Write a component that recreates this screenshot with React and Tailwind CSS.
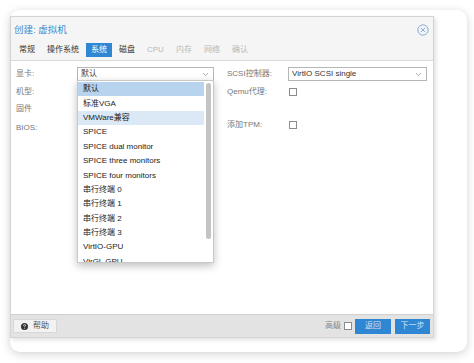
import React from 'react'

const font = { fontFamily: '"Liberation Sans", "Noto Sans CJK SC", sans-serif' }

const tabs = [
  { label: '常规', state: 'on' },
  { label: '操作系统', state: 'on' },
  { label: '系统', state: 'active' },
  { label: '磁盘', state: 'on' },
  { label: 'CPU', state: 'off' },
  { label: '内存', state: 'off' },
  { label: '网络', state: 'off' },
  { label: '确认', state: 'off' },
]

const options = [
  '默认',
  '标准VGA',
  'VMWare兼容',
  'SPICE',
  'SPICE dual monitor',
  'SPICE three monitors',
  'SPICE four monitors',
  '串行终端 0',
  '串行终端 1',
  '串行终端 2',
  '串行终端 3',
  'VirtIO-GPU',
  'VirGL GPU',
]

function Chevron() {
  return (
    <svg width="7" height="5" viewBox="0 0 7 5" className="text-gray-400">
      <path d="M1 1.2 L3.5 3.6 L6 1.2" fill="none" stroke="currentColor" strokeWidth="0.9" />
    </svg>
  )
}

function Checkbox() {
  return <div className="w-[8px] h-[8px] shrink-0 border border-[#8c8c8c] bg-white" />
}

export default function App() {
  return (
    <div className="w-[474px] h-[363px] bg-white overflow-hidden pt-[10px] pl-[10px]" style={font}>
      <div className="w-[457px] h-[342px] rounded-[10px] bg-white shadow-[0_2px_10px_rgba(0,0,0,0.18)] pt-[6px] flex">
        {/* dialog */}
        <div className="w-[424px] h-[322px] flex flex-col bg-[#f5f5f5] border border-[#d4d4d4] shadow-[2px_2px_4px_rgba(0,0,0,0.12)]">
          <div className="h-[22px] flex items-center justify-between pl-[3px] pr-[4px] pt-[4px]">
            <span className="text-[9.5px] text-[#3d8fd1]">创建: 虚拟机</span>
            <svg width="12" height="12" viewBox="0 0 12 12" className="text-[#7ba7d6]">
              <circle cx="6" cy="6" r="5.2" fill="none" stroke="currentColor" strokeWidth="0.9" />
              <path d="M3.9 3.9 L8.1 8.1 M8.1 3.9 L3.9 8.1" stroke="currentColor" strokeWidth="0.9" />
            </svg>
          </div>
          <div className="h-[21px] flex items-center pl-[3px] gap-[2px]">
            {tabs.map((t) => (
              <div
                key={t.label}
                className={
                  t.state === 'active'
                    ? 'h-[14px] px-[5px] flex items-center bg-[#2f86d2] text-white text-[8px]'
                    : t.state === 'on'
                    ? 'h-[14px] px-[5px] flex items-center text-[#333] text-[8px]'
                    : 'h-[14px] px-[5px] flex items-center text-[#b8b8b8] text-[8px]'
                }
              >
                {t.label}
              </div>
            ))}
          </div>
          {/* body */}
          <div className="relative flex-1 bg-white border-t border-[#d9d9d9] flex pt-[6px] pl-[5px]">
            <div className="w-[204px] shrink-0 flex flex-col text-[8px] text-[#777]">
              <div className="h-[14px] flex items-center">
                <span className="w-[61px] shrink-0">显卡:</span>
                <div className="w-[137px] h-[14px] border border-[#b6b6b6] flex items-center justify-between pl-[3px] pr-[4px] text-[#444]">
                  <span>默认</span>
                  <Chevron />
                </div>
              </div>
              <div className="h-[17px] mt-[2px] flex items-center">机型:</div>
              <div className="h-[18px] flex items-center">固件</div>
              <div className="h-[20px] flex items-center">BIOS:</div>
            </div>
            <div className="ml-[7px] shrink-0 flex flex-col text-[8px] text-[#777]">
              <div className="h-[14px] flex items-center">
                <span className="w-[61px] shrink-0 whitespace-nowrap">SCSI控制器:</span>
                <div className="w-[139px] h-[14px] border border-[#b6b6b6] flex items-center justify-between pl-[3px] pr-[4px] text-[#333]">
                  <span>VirtIO SCSI single</span>
                  <Chevron />
                </div>
              </div>
              <div className="h-[17px] mt-[2px] flex items-center">
                <span className="w-[62px] shrink-0 whitespace-nowrap">Qemu代理:</span>
                <Checkbox />
              </div>
              <div className="h-[18px]" />
              <div className="h-[14px] flex items-center">
                <span className="w-[62px] shrink-0 whitespace-nowrap">添加TPM:</span>
                <Checkbox />
              </div>
            </div>

            {/* open dropdown */}
            <div className="absolute left-[66px] top-[19px] w-[137px] h-[183px] overflow-hidden bg-white border border-[#c8c8c8] shadow-[0_3px_8px_rgba(0,0,0,0.25)] flex">
              <div className="flex-1 flex flex-col pt-[1px]">
                {options.map((o, i) => (
                  <div
                    key={o}
                    className={
                      i === 0
                        ? 'h-[14.4px] shrink-0 flex items-center pl-[5px] text-[8px] text-[#222] bg-[#b7d3ee]'
                        : i === 2
                        ? 'h-[14.4px] shrink-0 flex items-center pl-[5px] text-[8px] text-[#222] bg-[#dbe9f7]'
                        : 'h-[14.4px] shrink-0 flex items-center pl-[5px] text-[8px] text-[#222]'
                    }
                  >
                    {o}
                  </div>
                ))}
              </div>
              <div className="w-[9px] flex justify-center pt-[2px]">
                <div className="w-[5px] h-[156px] rounded-full bg-[#c4c4c4]" />
              </div>
            </div>
          </div>
          {/* footer */}
          <div className="h-[23px] bg-[#e3e3e3] border-t border-[#d0d0d0] flex items-center justify-between pl-[2px] pr-[3px]">
            <div className="h-[14px] w-[44px] bg-[#f2f2f2] border border-[#d8d8d8] flex items-center pl-[7px] gap-[5px] text-[8px] text-[#555]">
              <svg width="7" height="7" viewBox="0 0 8 8">
                <circle cx="4" cy="4" r="4" fill="#333" />
                <path d="M2.8 3 Q2.8 1.8 4 1.8 Q5.2 1.8 5.2 2.9 Q5.2 3.6 4.3 4 L4.1 4.8" fill="none" stroke="#fff" strokeWidth="0.9" />
                <circle cx="4.1" cy="6" r="0.55" fill="#fff" />
              </svg>
              <span>帮助</span>
            </div>
            <div className="flex items-center text-[8px]">
              <span className="text-[#888] mr-[3px]">高级</span>
              <Checkbox />
              <div className="ml-[3px] w-[36px] h-[15px] bg-[#2f86d2] text-[#cfe3f5] flex items-center justify-center">返回</div>
              <div className="ml-[4px] w-[35px] h-[15px] bg-[#2f86d2] text-[#cfe3f5] flex items-center justify-center">下一步</div>
            </div>
          </div>
        </div>
      </div>
    </div>
  )
}
